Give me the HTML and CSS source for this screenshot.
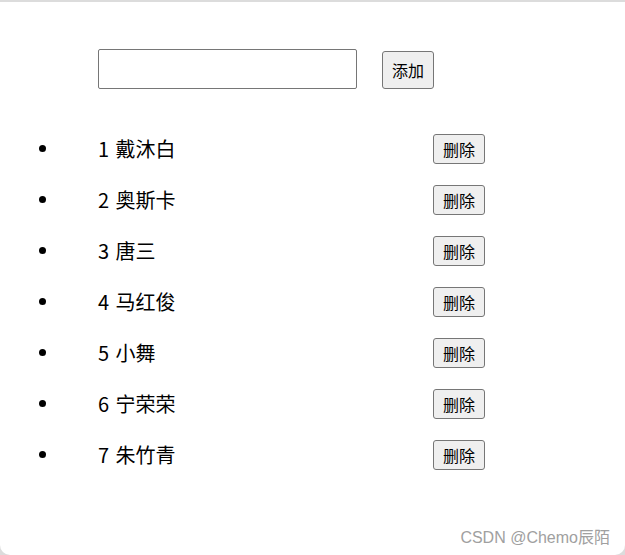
FILE: index.html
```html
<!DOCTYPE html>
<html>
<head>
    <meta charset="utf-8">
    <title>列表</title>
    <link rel="stylesheet" href="styles.css">
</head>
<body>
    <div class="page">
        <div class="add-row">
            <input class="name-input" type="text">
            <button class="btn add-btn">添加</button>
        </div>

        <ul class="list">
            <li><span class="item">1 戴沐白</span><button class="btn del-btn">删除</button></li>
            <li><span class="item">2 奥斯卡</span><button class="btn del-btn">删除</button></li>
            <li><span class="item">3 唐三</span><button class="btn del-btn">删除</button></li>
            <li><span class="item">4 马红俊</span><button class="btn del-btn">删除</button></li>
            <li><span class="item">5 小舞</span><button class="btn del-btn">删除</button></li>
            <li><span class="item">6 宁荣荣</span><button class="btn del-btn">删除</button></li>
            <li><span class="item">7 朱竹青</span><button class="btn del-btn">删除</button></li>
        </ul>

        <div class="watermark">CSDN @Chemo辰陌</div>
    </div>
</body>
</html>
```

FILE: styles.css
```css
body {
    margin: 0;
    background: #dcdcdc;
    font-family: "Noto Sans CJK SC", "Noto Sans", sans-serif;
}

.page {
    position: relative;
    margin-top: 2px;
    height: 553px;
    background: #fff;
    border-radius: 0 0 10px 10px;
}

.add-row {
    display: flex;
    align-items: flex-end;
    gap: 25px;
    padding: 47px 0 0 98px;
}

.name-input {
    box-sizing: border-box;
    width: 259px;
    height: 40px;
    margin: 0;
    border: 1px solid #767676;
    border-radius: 2px;
}

.btn {
    box-sizing: border-box;
    margin: 0;
    padding: 0;
    background: #efefef;
    border: 1px solid #767676;
    border-radius: 3px;
    font-family: "Noto Sans CJK SC", sans-serif;
    font-size: 16px;
    color: #000;
}

.add-btn {
    width: 52px;
    height: 38px;
}

.list {
    list-style: none;
    margin: 34px 0 0;
    padding-left: 39px;
    font-size: 20px;
}

.list li {
    display: flex;
    align-items: center;
    height: 51px;
}

.list li::before {
    content: "";
    width: 7px;
    height: 7px;
    margin-right: 52px;
    border-radius: 50%;
    background: #000;
}

.item {
    width: 335px;
    word-spacing: 2px;
    line-height: 24px;
}

.del-btn {
    width: 52px;
    height: 30px;
}

.watermark {
    position: absolute;
    right: 15px;
    bottom: 7px;
    font-family: "Liberation Sans", "Noto Sans CJK SC", sans-serif;
    font-size: 16px;
    color: #a0a0a0;
}
```
